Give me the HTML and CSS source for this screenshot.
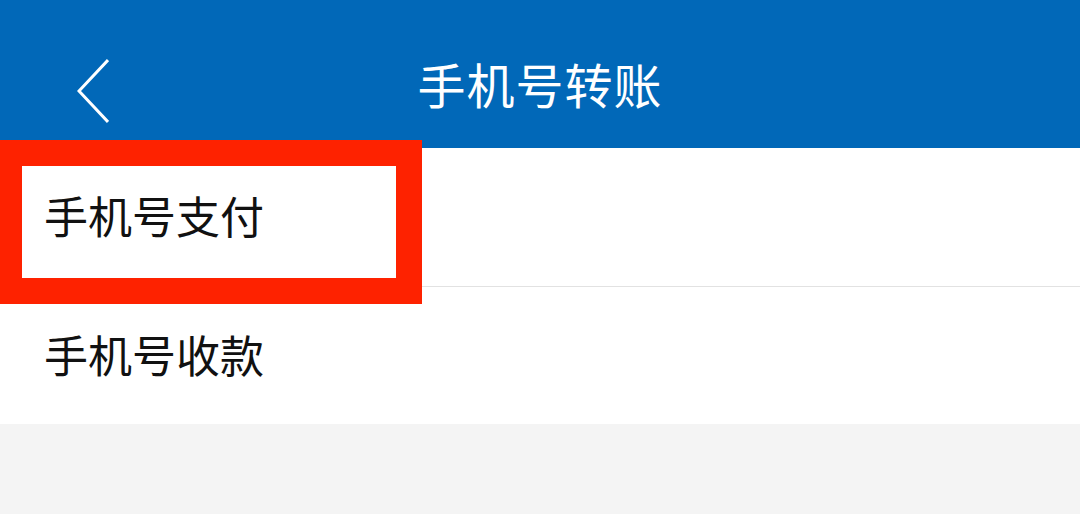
FILE: index.html
```html
<!DOCTYPE html>
<html lang="zh">
<head>
<meta charset="utf-8">
<title>手机号转账</title>
<link rel="stylesheet" href="styles.css">
</head>
<body>
<header class="topbar">
  <div class="back">
    <svg class="back-icon" width="32" height="66" viewBox="0 0 32 66"><polyline points="31,2 2,33 31,64" fill="none" stroke="#ffffff" stroke-width="3" stroke-linecap="butt" stroke-linejoin="miter"/></svg>
  </div>
  <h1 class="title">手机号转账</h1>
  <div></div>
</header>
<main class="list">
  <div class="row row-first">手机号支付</div>
  <div class="row">手机号收款</div>
</main>
<div class="highlight"></div>
</body>
</html>
```
FILE: styles.css
```css
html, body {
  margin: 0;
  padding: 0;
}
body {
  background: #f4f4f4;
  font-family: "Noto Sans CJK SC", "Noto Sans", sans-serif;
  width: 1080px;
  height: 514px;
  overflow: hidden;
  position: relative;
}
.topbar {
  height: 148px;
  background: #0168b8;
  display: grid;
  grid-template-columns: 1fr auto 1fr;
  align-items: start;
  box-sizing: border-box;
}
.back {
  padding-left: 77px;
  padding-top: 58px;
}
.back-icon {
  display: block;
}
.title {
  margin: 0;
  padding-top: 59px;
  color: #ffffff;
  font-size: 48px;
  font-weight: 400;
  line-height: 48px;
  letter-spacing: 1px;
}
.list {
  background: #ffffff;
}
.row {
  height: 137px;
  box-sizing: border-box;
  padding-bottom: 4px;
  display: flex;
  align-items: center;
  padding-left: 44px;
  font-size: 44px;
  line-height: 44px;
  color: #111111;
}
.row-first {
  height: 139px;
  border-bottom: 1px solid #e2e2e2;
}
.highlight {
  position: absolute;
  left: 0;
  top: 140px;
  width: 422px;
  height: 164px;
  box-sizing: border-box;
  border-style: solid;
  border-color: #fe2200;
  border-width: 26px 26px 26px 22px;
}
```
